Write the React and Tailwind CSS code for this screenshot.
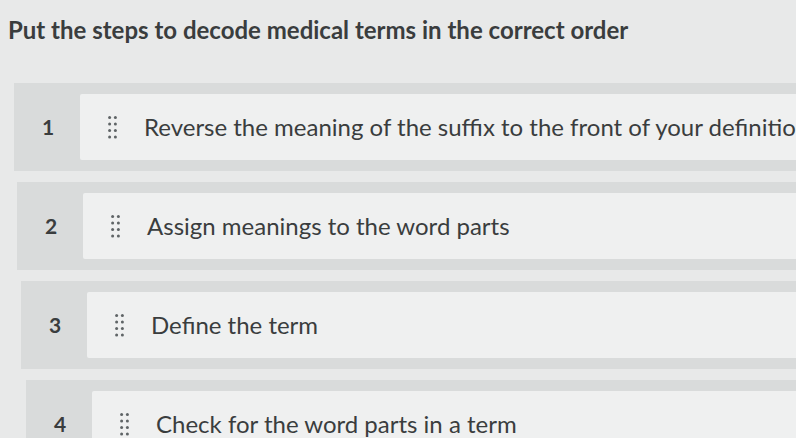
import React from "react";

const steps = [
  { text: "Reverse the meaning of the suffix to the front of your definition", shift: "ml-0" },
  { text: "Assign meanings to the word parts", shift: "ml-[3px]" },
  { text: "Define the term", shift: "ml-[7px]" },
  { text: "Check for the word parts in a term", shift: "ml-[12px]" },
];

// drag handle: two columns of four dots
const Grip = () => (
  <svg width="9" height="24" viewBox="0 0 9 24" className="shrink-0">
    {[2.5, 9, 15.5, 22].map((y) => (
      <g key={y}>
        <circle cx="1.6" cy={y} r="1.5" fill="#5f6466" />
        <circle cx="7.4" cy={y} r="1.5" fill="#5f6466" />
      </g>
    ))}
  </svg>
);

const App = () => {
  return (
    <div
      className="w-[796px] h-[438px] overflow-hidden bg-[#e8e9e9] text-[#3a3d3e]"
      style={{ fontFamily: "Lato, 'Open Sans', sans-serif" }}
    >
      <h1 className="pl-[8px] pt-[14px] text-[24px] font-bold leading-[32px] whitespace-nowrap">
        Put the steps to decode medical terms in the correct order
      </h1>
      <div className="mt-[37px] flex flex-col gap-[11px] pl-[14px]">
        {steps.map(({ text, shift }, i) => (
          <div
            key={i}
            className={`${shift} flex items-stretch bg-[#d9dbdb] h-[88px] py-[11px] w-[840px]`}
          >
            <div className="w-[66px] shrink-0 flex items-center justify-center pl-[2px] text-[21px] font-bold">
              {i + 1}
            </div>
            <div className="flex-1 flex items-center bg-[#eff0f0] rounded-[2px] pl-[28px] gap-[27px] whitespace-nowrap overflow-hidden">
              <Grip />
              <span className="text-[24px]">{text}</span>
            </div>
          </div>
        ))}
      </div>
    </div>
  );
};

export default App;
